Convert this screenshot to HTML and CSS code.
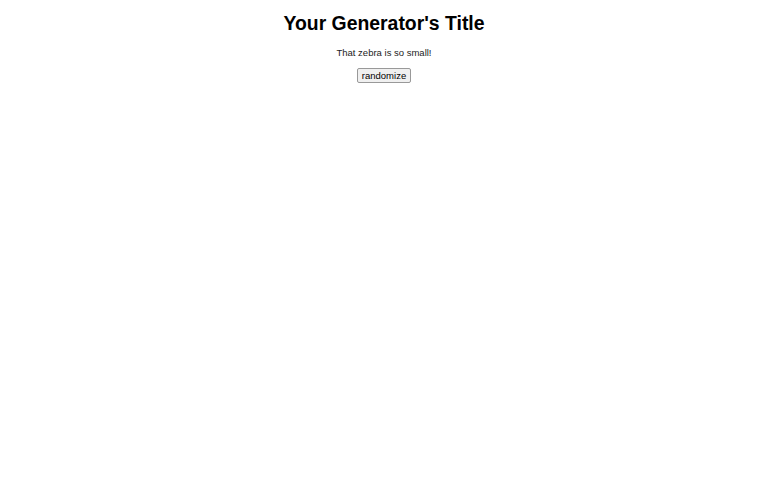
FILE: index.html
```html
<!DOCTYPE html>
<html>
<head>
<meta charset="utf-8">
<link rel="stylesheet" href="styles.css">
</head>
<body>
<div class="page">
  <h1 class="title">Your Generator's Title</h1>
  <p class="output">That zebra is so small!</p>
  <button class="btn">randomize</button>
</div>
</body>
</html>
```
FILE: styles.css
```css
body {
  margin: 8px;
  font-family: "Liberation Sans", Arial, sans-serif;
  background: #fff;
  color: #000;
}
.page {
  display: flex;
  flex-direction: column;
  align-items: center;
}
.title {
  font-size: 19.4px;
  font-weight: bold;
  margin: 4px 0 0;
  line-height: 22px;
}
.output {
  font-size: 9.5px;
  margin: 13px 0 0;
  line-height: 11px;
  color: #222;
}
.btn {
  margin-top: 10px;
  font-family: "Liberation Sans", Arial, sans-serif;
  font-size: 9.5px;
  line-height: 11px;
  height: 15px;
  padding: 0 4px;
  border: 1px solid #999;
  border-radius: 2px;
  background: #f0f0f0;
  color: #000;
}
```
